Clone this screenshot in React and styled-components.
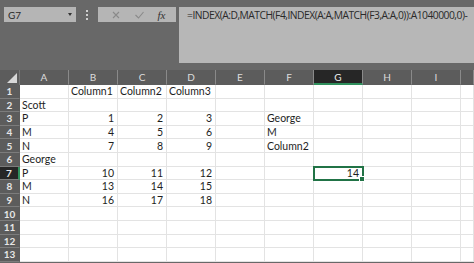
import React from 'react'
import styled, { createGlobalStyle } from 'styled-components'

const GlobalStyle = createGlobalStyle`
  html, body {
    margin: 0;
    padding: 0;
    background: #686868;
    overflow: hidden;
  }
  body {
    font-family: Lato, "Open Sans", "Liberation Sans", sans-serif;
  }
`

const Page = styled.div`
  width: 474px;
  height: 263px;
  display: flex;
  flex-direction: column;
  overflow: hidden;
`

const Toolbar = styled.div`
  height: 63px;
  display: flex;
  align-items: flex-start;
  padding: 7px 0 0 4px;
  box-sizing: border-box;
  background: #686868;
`

const NameBox = styled.div`
  width: 72px;
  height: 15px;
  background: #b5b5b5;
  display: flex;
  align-items: center;
  justify-content: space-between;
  padding: 0 4px 0 4px;
  box-sizing: border-box;
  font-size: 10px;
  color: #2a2a2a;
`

const Caret = styled.span`
  width: 0;
  height: 0;
  border-left: 2.5px solid transparent;
  border-right: 2.5px solid transparent;
  border-top: 3px solid #333;
`

const Grip = styled.div`
  width: 22px;
  height: 15px;
  display: flex;
  flex-direction: column;
  align-items: center;
  justify-content: center;
  gap: 2px;

  span {
    width: 2px;
    height: 2px;
    background: #cfcfcf;
  }
`

const Buttons = styled.div`
  width: 78px;
  height: 15px;
  background: #b5b5b5;
  display: flex;
  align-items: center;
  justify-content: space-around;
  padding: 0 4px 0 6px;
  box-sizing: border-box;
`

const Fx = styled.span`
  font-family: "Liberation Serif", serif;
  font-style: italic;
  font-size: 11px;
  color: #333;
`

const FormulaBox = styled.div`
  flex: 1;
  height: 56px;
  margin-left: 3px;
  background: #b7b7b7;
  padding: 1px 0 0 8px;
  box-sizing: border-box;
  font-size: 10.3px;
  color: #2a2a2a;
  white-space: nowrap;
  overflow: hidden;
  font-family: "Open Sans", "Liberation Sans", sans-serif;
  letter-spacing: -0.5px;
`

const Sheet = styled.div`
  display: grid;
  grid-template-columns: 20px repeat(9, 49px) 1fr;
  grid-template-rows: 7px 15px repeat(13, 13.6px);
  background: #fff;
`

const Gap = styled.div`
  grid-column: 1 / -1;
  background: #686868;
`

const Corner = styled.div`
  background: #5c5c5c;
  position: relative;
  border-right: 1px solid #777;

  &::after {
    content: '';
    position: absolute;
    right: 2px;
    bottom: 2px;
    border-left: 10px solid transparent;
    border-bottom: 10px solid #d8d8d8;
  }
`

const ColHead = styled.div`
  background: ${(p) => (p.$active ? '#262626' : '#5c5c5c')};
  color: ${(p) => (p.$active ? '#f0f0f0' : '#dcdcdc')};
  border-right: 1px solid #8a8a8a;
  border-bottom: ${(p) => (p.$active ? '2px solid #2f8f5c' : '1px solid #5c5c5c')};
  box-sizing: border-box;
  font-size: 10px;
  display: flex;
  align-items: center;
  justify-content: center;
`

const RowHead = styled.div`
  background: ${(p) => (p.$active ? '#262626' : '#5c5c5c')};
  color: #e6e6e6;
  border-bottom: 1px solid #7c7c7c;
  border-right: ${(p) => (p.$active ? '2px solid #2f8f5c' : '1px solid #5c5c5c')};
  box-sizing: border-box;
  font-size: 10px;
  font-weight: bold;
  display: flex;
  align-items: center;
  justify-content: center;
`

const Cell = styled.div`
  position: relative;
  border-right: 1px solid #e3e3e3;
  border-bottom: 1px solid #e3e3e3;
  box-sizing: border-box;
  font-size: 10.5px;
  color: #1e1e1e;
  display: flex;
  align-items: center;
  justify-content: ${(p) => (p.$num ? 'flex-end' : 'flex-start')};
  padding: 0 3px 0 2px;
  white-space: nowrap;
  overflow: visible;

  ${(p) =>
    p.$selected &&
    `
    outline: 2px solid #217346;
    outline-offset: -1px;
    z-index: 1;
    &::after {
      content: '';
      position: absolute;
      right: -3px;
      bottom: -3px;
      width: 4px;
      height: 4px;
      background: #217346;
      border: 1px solid #fff;
    }
  `}
`

const columns = ['A', 'B', 'C', 'D', 'E', 'F', 'G', 'H', 'I', '']

const data = {
  1: { B: 'Column1', C: 'Column2', D: 'Column3' },
  2: { A: 'Scott' },
  3: { A: 'P', B: 1, C: 2, D: 3, F: 'George' },
  4: { A: 'M', B: 4, C: 5, D: 6, F: 'M' },
  5: { A: 'N', B: 7, C: 8, D: 9, F: 'Column2' },
  6: { A: 'George' },
  7: { A: 'P', B: 10, C: 11, D: 12, G: 14 },
  8: { A: 'M', B: 13, C: 14, D: 15 },
  9: { A: 'N', B: 16, C: 17, D: 18 },
}

function App() {
  const rows = Array.from({ length: 13 }, (_, i) => i + 1)

  return (
    <Page>
      <GlobalStyle />
      <Toolbar>
        <NameBox>
          G7
          <Caret />
        </NameBox>
        <Grip>
          <span />
          <span />
          <span />
        </Grip>
        <Buttons>
          <svg width="10" height="10" viewBox="0 0 10 10">
            <path d="M2 2 L8 8 M8 2 L2 8" stroke="#8a8a8a" strokeWidth="1.1" />
          </svg>
          <svg width="11" height="10" viewBox="0 0 11 10">
            <path d="M1.5 5 L4.5 8 L9.5 2" stroke="#8a8a8a" strokeWidth="1.1" fill="none" />
          </svg>
          <Fx>fx</Fx>
        </Buttons>
        <FormulaBox>=INDEX(A:D,MATCH(F4,INDEX(A:A,MATCH(F3,A:A,0)):A1040000,0)-</FormulaBox>
      </Toolbar>
      <Sheet>
        <Gap />
        <Corner />
        {columns.map((c, i) => (
          <ColHead key={i} $active={c === 'G'}>
            {c}
          </ColHead>
        ))}
        {rows.map((r) => (
          <React.Fragment key={r}>
            <RowHead $active={r === 7}>{r}</RowHead>
            {columns.map((c, i) => {
              const v = data[r] && data[r][c]
              return (
                <Cell
                  key={i}
                  $num={typeof v === 'number'}
                  $selected={r === 7 && c === 'G'}
                >
                  {v}
                </Cell>
              )
            })}
          </React.Fragment>
        ))}
      </Sheet>
    </Page>
  )
}

export default App
